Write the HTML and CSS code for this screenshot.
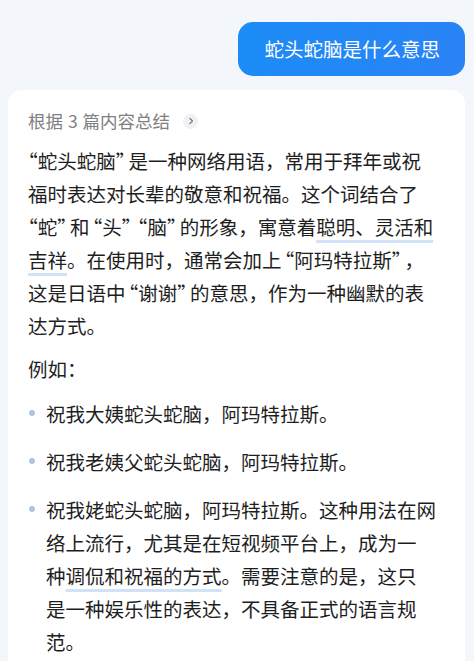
FILE: index.html
```html
<!DOCTYPE html>
<html lang="zh-CN">
<head>
<meta charset="utf-8">
<link rel="stylesheet" href="styles.css">
</head>
<body>
<div class="page">
  <div class="bubble">蛇头蛇脑是什么意思</div>
  <div class="card">
    <div class="source">根据 3 篇内容总结<span class="chev"><svg width="8" height="8" viewBox="0 0 8 8"><path d="M3 1.5 L5.5 4 L3 6.5" fill="none" stroke="#777" stroke-width="1.2" stroke-linecap="round" stroke-linejoin="round"/></svg></span></div>
    <p class="para"><span class="q">“</span>蛇头蛇脑<span class="q c">”</span>是一种网络用语，常用于拜年或祝<br>福时表达对长辈的敬意和祝福。这个词结合了<br><span class="q">“</span>蛇<span class="q c">”</span>和<span class="q o">“</span>头<span class="q c">”</span><span class="q o">“</span>脑<span class="q c">”</span>的形象，寓意着<span class="mark">聪明、灵活和</span><br><span class="mark">吉祥</span>。在使用时，通常会加上<span class="q o">“</span>阿玛特拉斯<span class="q c">”</span>，<br>这是日语中<span class="q o">“</span>谢谢<span class="q c">”</span>的意思，作为一种幽默的表<br>达方式。</p>
    <p class="para lead">例如：</p>
    <ul class="list">
      <li>祝我大姨蛇头蛇脑，阿玛特拉斯。</li>
      <li>祝我老姨父蛇头蛇脑，阿玛特拉斯。</li>
      <li>祝我姥蛇头蛇脑，阿玛特拉斯。这种用法在网<br>络上流行，尤其是在短视频平台上，成为一<br>种<span class="mark">调侃和祝福的方式</span>。需要注意的是，这只<br>是一种娱乐性的表达，不具备正式的语言规<br>范。</li>
    </ul>
  </div>
</div>
</body>
</html>
```
FILE: styles.css
```css
html, body {
  margin: 0;
  padding: 0;
  background: #f3f6fa;
}
body {
  font-family: "Noto Sans CJK SC", "Noto Sans", sans-serif;
  color: #1e1e1e;
}
.page {
  display: flex;
  flex-direction: column;
  padding: 22px 9px 0 8px;
  height: 661px;
  box-sizing: border-box;
  overflow: hidden;
}
.bubble {
  align-self: flex-end;
  height: 54px;
  line-height: 54px;
  padding: 0 25px 0 26px;
  border-radius: 15px;
  background: linear-gradient(90deg, #1c8cf6, #2a83f6);
  color: #fff;
  font-size: 19.5px;
  white-space: nowrap;
}
.card {
  margin-top: 14px;
  background: #fff;
  border-radius: 14px;
  padding: 20px 20px 20px 20px;
  flex: 1;
}
.source {
  font-size: 17.5px;
  line-height: 22px;
  color: #808080;
  display: flex;
  align-items: center;
  white-space: pre;
  word-spacing: 1px;
}
.chev {
  display: inline-flex;
  align-items: center;
  justify-content: center;
  width: 15px;
  height: 15px;
  border-radius: 50%;
  background: #f0f1f4;
  margin-left: 13px;
}
.para {
  margin: 11.5px 0 0 0;
  font-size: 19.5px;
  line-height: 33px;
  white-space: nowrap;
}
.q {
  font-feature-settings: "halt" 1;
}
.q.o {
  margin-left: 3px;
}
.q.c {
  margin-right: 3px;
}
.lead {
  margin-top: 10px;
}
.mark {
  text-decoration: underline;
  text-decoration-color: #cfe2f7;
  text-decoration-thickness: 3px;
  text-underline-offset: 5px;
}
.list {
  list-style: none;
  margin: 12px 0 0 0;
  padding: 0;
  font-size: 19.5px;
  line-height: 33px;
  white-space: nowrap;
}
.list li {
  position: relative;
  padding-left: 18px;
  margin-bottom: 15px;
}
.list li::before {
  content: "";
  position: absolute;
  left: 1px;
  top: 13.5px;
  width: 6px;
  height: 6px;
  border-radius: 50%;
  background: #afc3e5;
}
```
